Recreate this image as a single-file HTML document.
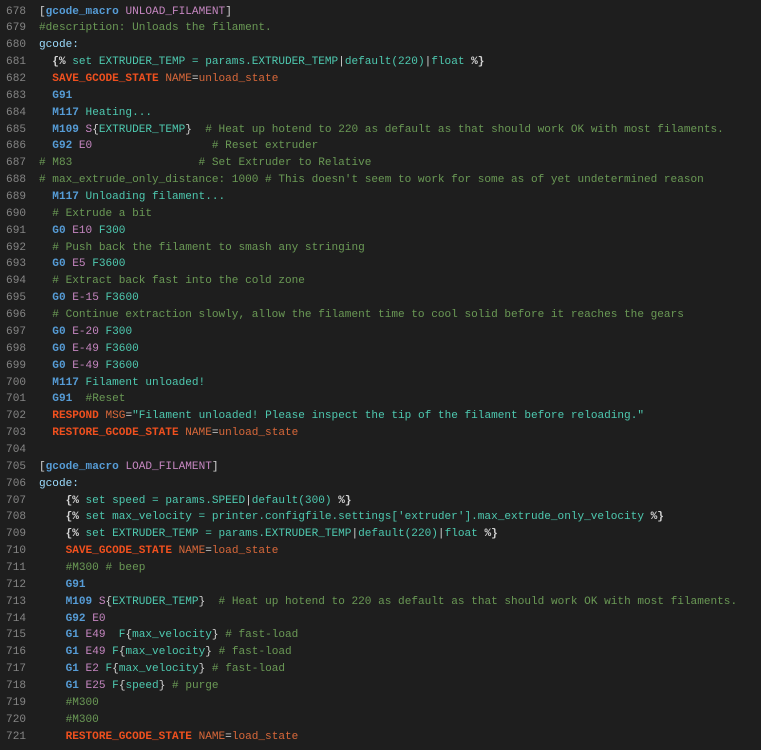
<!DOCTYPE html>
<html><head><meta charset="utf-8"><style>
html,body{margin:0;padding:0;background:#1e1e1e;width:761px;height:750px;overflow:hidden}
.c{position:absolute;top:3.6px;left:0;font-family:"Liberation Mono",monospace;font-size:11.08px;line-height:16.86px;color:#d4d4d4}
.r{display:block;height:16.86px;white-space:pre}
.n{display:inline-block;width:26px;text-align:right;color:#858585;margin-right:13px}
.k{color:#569cd6;font-weight:bold}
.p{color:#c586c0}
.g{color:#6a9955}
.t{color:#4ec9b0}
.l{color:#9cdcfe}
.o{color:#f0501e;font-weight:bold}
.a{color:#d9683a}
.w{color:#d4d4d4}
.b{color:#d4d4d4;font-weight:bold}
</style></head><body><div class="c">
<span class="r"><span class="n">678</span><span class="w">[</span><span class="k">gcode_macro</span> <span class="p">UNLOAD_FILAMENT</span><span class="w">]</span></span>
<span class="r"><span class="n">679</span><span class="g">#description: Unloads the filament.</span></span>
<span class="r"><span class="n">680</span><span class="l">gcode:</span></span>
<span class="r"><span class="n">681</span>  <span class="b">{%</span><span class="t"> set EXTRUDER_TEMP = params.EXTRUDER_TEMP</span><span class="w">|</span><span class="t">default(220)</span><span class="w">|</span><span class="t">float </span><span class="b">%}</span></span>
<span class="r"><span class="n">682</span>  <span class="o">SAVE_GCODE_STATE</span> <span class="a">NAME</span><span class="w">=</span><span class="a">unload_state</span></span>
<span class="r"><span class="n">683</span>  <span class="k">G91</span></span>
<span class="r"><span class="n">684</span>  <span class="k">M117</span> <span class="t">Heating...</span></span>
<span class="r"><span class="n">685</span>  <span class="k">M109</span> <span class="p">S</span><span class="w">{</span><span class="t">EXTRUDER_TEMP</span><span class="w">}</span>  <span class="g"># Heat up hotend to 220 as default as that should work OK with most filaments.</span></span>
<span class="r"><span class="n">686</span>  <span class="k">G92</span> <span class="p">E0</span>                  <span class="g"># Reset extruder</span></span>
<span class="r"><span class="n">687</span><span class="g"># M83                   # Set Extruder to Relative</span></span>
<span class="r"><span class="n">688</span><span class="g"># max_extrude_only_distance: 1000 # This doesn't seem to work for some as of yet undetermined reason</span></span>
<span class="r"><span class="n">689</span>  <span class="k">M117</span> <span class="t">Unloading filament...</span></span>
<span class="r"><span class="n">690</span>  <span class="g"># Extrude a bit</span></span>
<span class="r"><span class="n">691</span>  <span class="k">G0</span> <span class="p">E10</span> <span class="t">F300</span></span>
<span class="r"><span class="n">692</span>  <span class="g"># Push back the filament to smash any stringing</span></span>
<span class="r"><span class="n">693</span>  <span class="k">G0</span> <span class="p">E5</span> <span class="t">F3600</span></span>
<span class="r"><span class="n">694</span>  <span class="g"># Extract back fast into the cold zone</span></span>
<span class="r"><span class="n">695</span>  <span class="k">G0</span> <span class="p">E-15</span> <span class="t">F3600</span></span>
<span class="r"><span class="n">696</span>  <span class="g"># Continue extraction slowly, allow the filament time to cool solid before it reaches the gears</span></span>
<span class="r"><span class="n">697</span>  <span class="k">G0</span> <span class="p">E-20</span> <span class="t">F300</span></span>
<span class="r"><span class="n">698</span>  <span class="k">G0</span> <span class="p">E-49</span> <span class="t">F3600</span></span>
<span class="r"><span class="n">699</span>  <span class="k">G0</span> <span class="p">E-49</span> <span class="t">F3600</span></span>
<span class="r"><span class="n">700</span>  <span class="k">M117</span> <span class="t">Filament unloaded!</span></span>
<span class="r"><span class="n">701</span>  <span class="k">G91</span>  <span class="g">#Reset</span></span>
<span class="r"><span class="n">702</span>  <span class="o">RESPOND</span> <span class="a">MSG</span><span class="w">=</span><span class="t">"Filament unloaded! Please inspect the tip of the filament before reloading."</span></span>
<span class="r"><span class="n">703</span>  <span class="o">RESTORE_GCODE_STATE</span> <span class="a">NAME</span><span class="w">=</span><span class="a">unload_state</span></span>
<span class="r"><span class="n">704</span></span>
<span class="r"><span class="n">705</span><span class="w">[</span><span class="k">gcode_macro</span> <span class="p">LOAD_FILAMENT</span><span class="w">]</span></span>
<span class="r"><span class="n">706</span><span class="l">gcode:</span></span>
<span class="r"><span class="n">707</span>    <span class="b">{%</span><span class="t"> set speed = params.SPEED</span><span class="w">|</span><span class="t">default(300) </span><span class="b">%}</span></span>
<span class="r"><span class="n">708</span>    <span class="b">{%</span><span class="t"> set max_velocity = printer.configfile.settings['extruder'].max_extrude_only_velocity </span><span class="b">%}</span></span>
<span class="r"><span class="n">709</span>    <span class="b">{%</span><span class="t"> set EXTRUDER_TEMP = params.EXTRUDER_TEMP</span><span class="w">|</span><span class="t">default(220)</span><span class="w">|</span><span class="t">float </span><span class="b">%}</span></span>
<span class="r"><span class="n">710</span>    <span class="o">SAVE_GCODE_STATE</span> <span class="a">NAME</span><span class="w">=</span><span class="a">load_state</span></span>
<span class="r"><span class="n">711</span>    <span class="g">#M300 # beep</span></span>
<span class="r"><span class="n">712</span>    <span class="k">G91</span></span>
<span class="r"><span class="n">713</span>    <span class="k">M109</span> <span class="p">S</span><span class="w">{</span><span class="t">EXTRUDER_TEMP</span><span class="w">}</span>  <span class="g"># Heat up hotend to 220 as default as that should work OK with most filaments.</span></span>
<span class="r"><span class="n">714</span>    <span class="k">G92</span> <span class="p">E0</span></span>
<span class="r"><span class="n">715</span>    <span class="k">G1</span> <span class="p">E49</span>  <span class="t">F</span><span class="w">{</span><span class="t">max_velocity</span><span class="w">}</span> <span class="g"># fast-load</span></span>
<span class="r"><span class="n">716</span>    <span class="k">G1</span> <span class="p">E49</span> <span class="t">F</span><span class="w">{</span><span class="t">max_velocity</span><span class="w">}</span> <span class="g"># fast-load</span></span>
<span class="r"><span class="n">717</span>    <span class="k">G1</span> <span class="p">E2</span> <span class="t">F</span><span class="w">{</span><span class="t">max_velocity</span><span class="w">}</span> <span class="g"># fast-load</span></span>
<span class="r"><span class="n">718</span>    <span class="k">G1</span> <span class="p">E25</span> <span class="t">F</span><span class="w">{</span><span class="t">speed</span><span class="w">}</span> <span class="g"># purge</span></span>
<span class="r"><span class="n">719</span>    <span class="g">#M300</span></span>
<span class="r"><span class="n">720</span>    <span class="g">#M300</span></span>
<span class="r"><span class="n">721</span>    <span class="o">RESTORE_GCODE_STATE</span> <span class="a">NAME</span><span class="w">=</span><span class="a">load_state</span></span>
</div></body></html>
